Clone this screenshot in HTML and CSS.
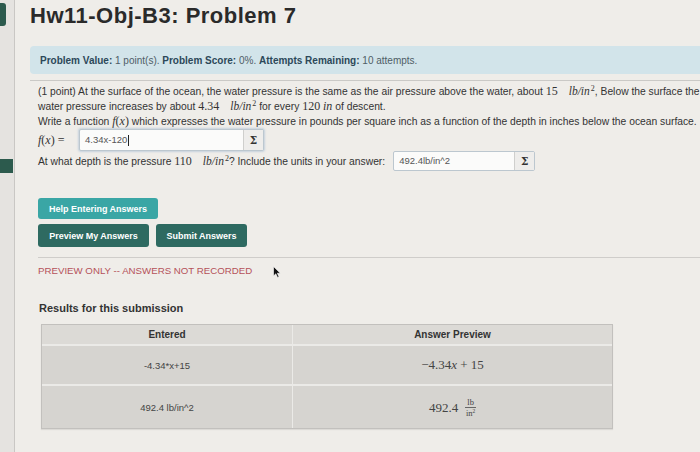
FILE: index.html
```html
<!DOCTYPE html>
<html>
<head>
<meta charset="utf-8">
<link rel="stylesheet" href="styles.css">
</head>
<body>
<div class="page">
  <aside class="sidebar">
    <span class="tab tab-top"></span>
    <span class="tab tab-mid"></span>
  </aside>
  <main class="main">
    <h1 class="title">Hw11-Obj-B3: Problem 7</h1>
    <div class="info"><b>Problem Value:</b>&nbsp;1 point(s).&nbsp;<b>Problem Score:</b>&nbsp;0%.&nbsp;<b>Attempts Remaining:</b>&nbsp;10 attempts.</div>
    <section class="problem">
      <div class="line">(1 point) At the surface of the ocean, the water pressure is the same as the air pressure above the water, about <span class="m">15</span><span class="mu">lb/in<sup>2</sup></span>, Below the surface the</div>
      <div class="line">water pressure increases by about <span class="m">4.34</span><span class="mu">lb/in<sup>2</sup></span> for every <span class="m">120</span> <span class="mi">in</span> of descent.</div>
      <div class="line">Write a function <span class="mi">f</span><span class="m">(</span><span class="mi">x</span><span class="m">)</span> which expresses the water pressure in pounds per square inch as a function of the depth in inches below the ocean surface.</div>
      <div class="row row-f">
        <span class="flabel"><span class="mi">f</span><span class="m">(</span><span class="mi">x</span><span class="m">) =</span></span>
        <span class="field field-focus"><span class="field-text field-wide">4.34x-120<span class="caret"></span></span><span class="sigma">&Sigma;</span></span>
      </div>
      <div class="row row-depth">
        <span class="line">At what depth is the pressure <span class="m">110</span><span class="mu">lb/in<sup>2</sup></span>? Include the units in your answer:</span>
        <span class="field field-second"><span class="field-text field-narrow">492.4lb/in^2</span><span class="sigma">&Sigma;</span></span>
      </div>
    </section>
    <section class="content">
      <div class="actions">
        <span class="btn btn-help">Help Entering Answers</span>
        <div class="btn-row">
          <span class="btn btn-dark btn-preview">Preview My Answers</span>
          <span class="btn btn-dark btn-submit">Submit Answers</span>
        </div>
      </div>
      <div class="notice">PREVIEW ONLY -- ANSWERS NOT RECORDED<svg class="pointer" width="8" height="12" viewBox="0 0 8 12"><path d="M0.5 0.5 L0.5 10 L2.8 7.8 L4.6 11.5 L6 10.8 L4.3 7.2 L7.3 7.2 Z" fill="#111" stroke="#fff" stroke-width="0.6"/></svg></div>
      <h2 class="results-title">Results for this submission</h2>
      <table class="results">
        <thead>
          <tr><th class="col-entered">Entered</th><th class="col-preview">Answer Preview</th></tr>
        </thead>
        <tbody>
          <tr class="r1"><td class="entered">-4.34*x+15</td><td class="preview"><span class="pm">&minus;4.34<i>x</i> + 15</span></td></tr>
          <tr class="r2"><td class="entered">492.4 lb/in^2</td><td class="preview"><span class="pm">492.4</span><span class="frac"><span class="num">lb</span><span class="den">in<span class="sq">2</span></span></span></td></tr>
        </tbody>
      </table>
    </section>
  </main>
</div>
</body>
</html>
```

FILE: styles.css
```css
* { box-sizing: border-box; }

body {
  margin: 0;
  background: #efede9;
  font-family: "Liberation Sans", Arial, sans-serif;
  color: #333;
}

.page {
  display: flex;
  width: 700px;
  height: 452px;
  overflow: hidden;
}

.sidebar {
  width: 15px;
  flex: none;
  background: #e5e3e0;
  border-right: 1px solid #c9c7c4;
  display: flex;
  flex-direction: column;
}

.tab { display: block; background: #2c5a4d; }
.tab-top { width: 6px; height: 23px; margin-top: 3px; border-radius: 0 3px 3px 0; }
.tab-mid { width: 13px; height: 14px; margin-top: 133px; }

.main {
  flex: 1;
  min-width: 0;
  padding-left: 15px;
}

.title {
  margin: 3px 0 0;
  font-size: 22px;
  line-height: 26px;
  font-weight: bold;
  letter-spacing: 0.5px;
  color: #2a2a2a;
}

.info {
  margin-top: 17px;
  height: 28px;
  background: #d2e4ea;
  border-radius: 4px 0 0 4px;
  padding-left: 10px;
  display: flex;
  align-items: center;
  font-size: 10px;
  color: #4f5d66;
  white-space: nowrap;
}
.info b { color: #2c4859; }

.problem {
  margin-top: 6px;
  border-top: 1px solid #cac9c6;
  padding: 3px 0 0 8px;
  font-size: 10.3px;
  line-height: 14px;
  white-space: nowrap;
}

.line { display: block; white-space: nowrap; }

.m { font-family: "Liberation Serif", "Times New Roman", serif; font-size: 12px; }
.mi { font-family: "Liberation Serif", "Times New Roman", serif; font-size: 12px; font-style: italic; }
.mu { font-family: "Liberation Serif", "Times New Roman", serif; font-size: 11.5px; font-style: italic; margin-left: 11px; }
.mu sup { font-size: 8px; vertical-align: 4px; line-height: 0; font-style: normal; margin-left: 1px; }

.row { display: flex; align-items: center; }
.row-f { height: 22px; }
.row-depth { height: 20px; }

.flabel { width: 41px; flex: none; }

.field {
  display: inline-flex;
  border: 1px solid #bcc7cf;
  background: #fbfbfa;
  border-radius: 2px;
}
.field-focus { height: 22px; box-shadow: 0 0 2px 1px rgba(120, 160, 200, 0.35); }
.field-second { height: 20px; margin-left: 8px; }

.field-text {
  display: flex;
  align-items: center;
  padding-left: 5px;
  font-size: 9.5px;
  color: #555;
}
.field-wide { width: 163px; }
.field-narrow { width: 120px; }

.caret { display: inline-block; width: 1px; height: 11px; background: #222; margin-left: 1px; }

.sigma {
  width: 20px;
  border-left: 1px solid #cfcfcd;
  background: #eeedeb;
  display: flex;
  align-items: center;
  justify-content: center;
  font-family: "DejaVu Serif", "Liberation Serif", serif;
  font-weight: bold;
  font-size: 10.5px;
  color: #333;
}

.content { padding-left: 8px; }

.actions { margin-top: 27px; display: flex; flex-direction: column; gap: 5px; }

.btn {
  display: flex;
  align-items: center;
  justify-content: center;
  color: #fff;
  font-weight: bold;
  font-size: 9px;
  border-radius: 3px;
}
.btn-help { width: 120px; height: 21px; background: #3aa6a5; }
.btn-row { display: flex; gap: 7px; }
.btn-dark { height: 23px; background: #2e6a61; }
.btn-preview { width: 111px; }
.btn-submit { width: 91px; }

.notice {
  margin-top: 10px;
  border-top: 1px solid #cfcdca;
  padding-top: 6px;
  font-size: 9.7px;
  line-height: 14px;
  color: #b5515a;
  display: flex;
  align-items: center;
}
.pointer { margin-left: 21px; margin-top: 2px; }

.results-title {
  margin: 23px 0 0 1px;
  font-size: 11px;
  line-height: 14px;
  font-weight: bold;
  color: #333;
}

.results {
  margin: 9px 0 0 3px;
  width: 572px;
  border-collapse: separate;
  border-spacing: 0;
  border: 1px solid #c2c0bd;
  background: #d6d4d0;
  box-shadow: 0 1px 1px rgba(0, 0, 0, 0.08);
  color: #333;
}

.results th {
  height: 19px;
  padding: 0;
  background: #dcdad6;
  font-size: 10px;
  font-weight: bold;
  text-align: center;
}
.col-entered { width: 250px; }

.results td {
  padding: 0;
  text-align: center;
  border-top: 2px solid #ebeae7;
}
.results th + th, .results td + td { border-left: 1px solid #ebeae7; }
.r1 td { height: 40px; }
.r2 td { height: 44px; }

.entered { font-size: 9.5px; color: #444; }

.preview { font-family: "Liberation Serif", "Times New Roman", serif; font-size: 13px; color: #444; }
.pm { vertical-align: middle; }

.frac {
  display: inline-flex;
  flex-direction: column;
  align-items: center;
  vertical-align: middle;
  margin-left: 7px;
  font-size: 8.5px;
  line-height: 10px;
}
.frac .num { border-bottom: 1px solid #666; padding: 0 2px; }
.frac .den { display: flex; align-items: flex-start; }
.frac .sq { font-size: 5.5px; line-height: 6px; }
```
